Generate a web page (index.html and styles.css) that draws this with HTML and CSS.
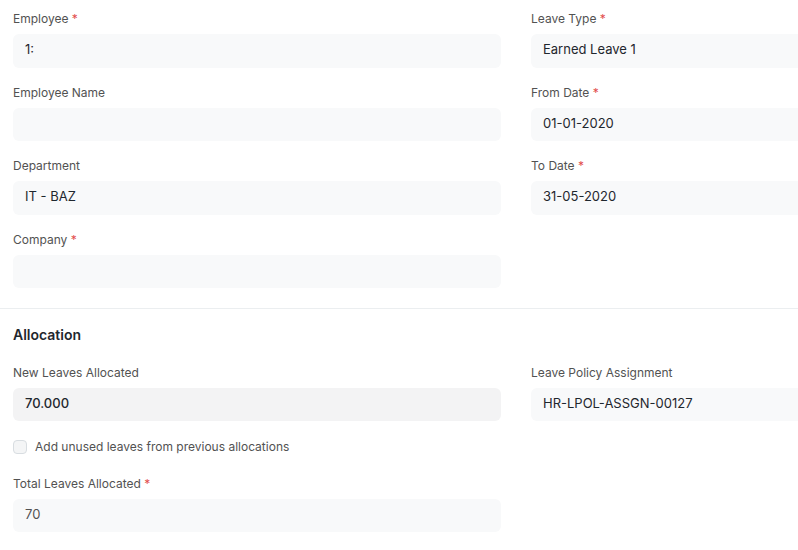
FILE: index.html
```html
<!DOCTYPE html>
<html>
<head>
<meta charset="utf-8">
<link rel="stylesheet" href="styles.css">
</head>
<body>
<div class="page">
  <section class="section first">
    <div class="grid">
      <div class="col">
        <div class="field">
          <div class="label">Employee <span class="req">*</span></div>
          <div class="input">1:</div>
        </div>
        <div class="field">
          <div class="label">Employee Name</div>
          <div class="input"></div>
        </div>
        <div class="field">
          <div class="label">Department</div>
          <div class="input">IT - BAZ</div>
        </div>
        <div class="field">
          <div class="label">Company <span class="req">*</span></div>
          <div class="input"></div>
        </div>
      </div>
      <div class="col">
        <div class="field">
          <div class="label">Leave Type <span class="req">*</span></div>
          <div class="input">Earned Leave 1</div>
        </div>
        <div class="field">
          <div class="label">From Date <span class="req">*</span></div>
          <div class="input">01-01-2020</div>
        </div>
        <div class="field">
          <div class="label">To Date <span class="req">*</span></div>
          <div class="input">31-05-2020</div>
        </div>
      </div>
    </div>
  </section>
  <section class="section second">
    <h3 class="heading">Allocation</h3>
    <div class="grid">
      <div class="col">
        <div class="field">
          <div class="label">New Leaves Allocated</div>
          <div class="input bold">70.000</div>
        </div>
        <div class="check-row">
          <span class="checkbox"></span>
          <span class="check-label">Add unused leaves from previous allocations</span>
        </div>
        <div class="field">
          <div class="label">Total Leaves Allocated <span class="req">*</span></div>
          <div class="input muted">70</div>
        </div>
      </div>
      <div class="col">
        <div class="field">
          <div class="label">Leave Policy Assignment</div>
          <div class="input">HR-LPOL-ASSGN-00127</div>
        </div>
      </div>
    </div>
  </section>
</div>
</body>
</html>
```
FILE: styles.css
```css
* { box-sizing: border-box; }
html, body { margin: 0; padding: 0; background: #fff; }
body {
  font-family: Inter, "Noto Sans", sans-serif;
  color: #1f272e;
  overflow: hidden;
}
.page {
  width: 798px;
  height: 550px;
  overflow: hidden;
}
.section {
  padding-left: 13px;
}
.section.first {
  padding-top: 11px;
  padding-bottom: 2px;
  border-bottom: 1px solid #ebeef0;
  width: 798px;
}
.section.second {
  padding-top: 16px;
}
.grid {
  display: grid;
  grid-template-columns: 488px 488px;
  column-gap: 30px;
}
.field {
  margin-bottom: 17.17px;
}
.label {
  font-size: 12px;
  line-height: 16px;
  color: #525252;
  margin-bottom: 7px;
}
.req { color: #e24c4c; }
.input {
  height: 33.5px;
  background: #f8f9fa;
  border-radius: 6px;
  padding: 0 12px;
  font-size: 13px;
  line-height: 31px;
  color: #1f272e;
}
.input.bold {
  background: #f3f3f4;
  font-weight: 500;
}
.input.muted { color: #525252; }
.heading {
  margin: 0 0 20px 0;
  font-size: 14px;
  line-height: 20px;
  font-weight: 600;
  color: #1f272e;
}
.check-row {
  display: flex;
  align-items: center;
  gap: 8px;
  height: 16px;
  margin-top: 17.5px;
  margin-bottom: 21px;
}
.checkbox {
  width: 14px;
  height: 14px;
  border: 1px solid #d8dde1;
  border-radius: 4px;
  background: #f4f5f6;
  flex: none;
}
.check-label {
  font-size: 12px;
  line-height: 16px;
  color: #525252;
}
```
